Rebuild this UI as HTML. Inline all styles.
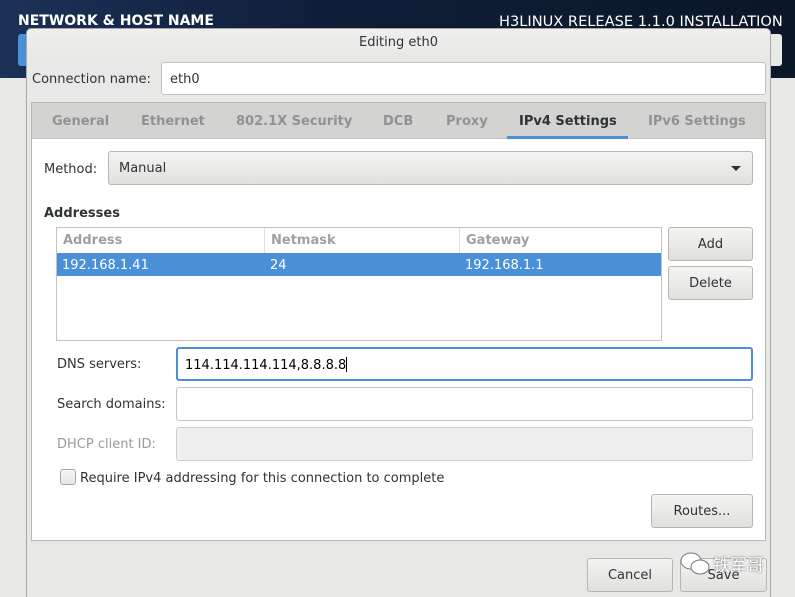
<!DOCTYPE html>
<html><head><meta charset="utf-8"><style>
*{box-sizing:border-box;margin:0;padding:0}
body{width:795px;height:597px;overflow:hidden;position:relative;background:#e8e8e7;font-family:"DejaVu Sans","Liberation Sans",sans-serif;font-size:13px;color:#2e3436}
.abs{position:absolute}
.hdr{left:0;top:0;width:795px;height:78px;background:linear-gradient(90deg,#1c3158,#0f1e38 40%,#0b1628)}
.btn{position:absolute;border:1px solid #b6b6b3;border-radius:3px;background:linear-gradient(#f4f4f2,#e0e0dd);text-align:center;color:#2e3436;padding-top:9px!important}
.inp{position:absolute;background:#fff;border:1px solid #c3c3c0;border-radius:3px}
.tab{position:absolute;top:114px;font-weight:bold;color:#929292}
.lbl{position:absolute;transform:translateY(2px)}
</style></head><body>
<div class="abs hdr"></div>
<div class="abs" style="left:18px;top:13px;color:#fff;font-weight:bold;font-size:14px">NETWORK &amp; HOST NAME</div>
<div class="abs" style="left:499px;top:13px;color:#fff;font-size:14.6px">H3LINUX RELEASE 1.1.0 INSTALLATION</div>
<div class="abs" style="left:18px;top:34px;width:12px;height:32px;background:#4a90d9;border-radius:3px"></div>
<div class="abs" style="left:760px;top:34px;width:22px;height:32px;background:#e8e8e7;border-radius:3px"></div>
<div class="abs" style="left:0;top:78px;width:795px;height:519px;background:#e8e8e7"></div>
<div class="abs" style="left:765px;top:527px;font-size:13px">t</div>

<div class="abs" style="left:26px;top:28px;width:745px;height:569px;background:#e8e8e7;border:1px solid #a8a8a5;border-bottom:none;border-radius:5px 5px 0 0"></div>
<div class="abs" style="left:27px;top:29px;width:743px;height:30px;background:linear-gradient(#efefee,#e8e8e7);border-radius:5px 5px 0 0"></div>
<div class="abs" style="left:26px;top:35px;width:745px;text-align:center">Editing eth0</div>

<div class="lbl" style="left:32px;top:70px">Connection name:</div>
<div class="inp" style="left:161px;top:62px;width:605px;height:33px"></div>
<div class="lbl" style="left:170px;top:70px">eth0</div>

<div class="abs" style="left:31px;top:102px;width:735px;height:439px;background:#fff;border:1px solid #b8b8b5"></div>
<div class="abs" style="left:32px;top:103px;width:733px;height:36px;background:#d3d3d1;border-bottom:1px solid #c3c3c0"></div>
<div class="tab" style="left:52px">General</div>
<div class="tab" style="left:141px">Ethernet</div>
<div class="tab" style="left:236px">802.1X Security</div>
<div class="tab" style="left:383px">DCB</div>
<div class="tab" style="left:446px">Proxy</div>
<div class="tab" style="left:519px;color:#2e3436">IPv4 Settings</div>
<div class="tab" style="left:648px">IPv6 Settings</div>
<div class="abs" style="left:507px;top:136px;width:121px;height:3px;background:#4a90d9"></div>

<div class="lbl" style="left:44px;top:160px">Method:</div>
<div class="btn" style="left:108px;top:151px;width:645px;height:34px;text-align:left;padding:9px 10px 0">Manual</div>
<div class="abs" style="left:731px;top:166px;width:0;height:0;border-left:5px solid transparent;border-right:5px solid transparent;border-top:5px solid #2e3436"></div>

<div class="lbl" style="left:44px;top:204px;font-weight:bold">Addresses</div>
<div class="abs" style="left:56px;top:227px;width:606px;height:114px;border:1px solid #c3c3c0;background:#fff"></div>
<div class="abs" style="left:264px;top:228px;width:1px;height:25px;background:#e0e0de"></div>
<div class="abs" style="left:459px;top:228px;width:1px;height:25px;background:#e0e0de"></div>
<div class="lbl" style="left:63px;top:231px;font-weight:bold;color:#a0a0a0">Address</div>
<div class="lbl" style="left:271px;top:231px;font-weight:bold;color:#a0a0a0">Netmask</div>
<div class="lbl" style="left:466px;top:231px;font-weight:bold;color:#a0a0a0">Gateway</div>
<div class="abs" style="left:57px;top:253px;width:604px;height:23px;background:#4a90d9"></div>
<div class="lbl" style="left:62px;top:256px;color:#fff">192.168.1.41</div>
<div class="lbl" style="left:270px;top:256px;color:#fff">24</div>
<div class="lbl" style="left:465px;top:256px;color:#fff">192.168.1.1</div>

<div class="btn" style="left:668px;top:227px;width:85px;height:34px">Add</div>
<div class="btn" style="left:668px;top:266px;width:85px;height:34px">Delete</div>

<div class="lbl" style="left:57px;top:355px">DNS servers:</div>
<div class="inp" style="left:176px;top:347px;width:577px;height:34px;border:2px solid #4a90d9"></div>
<div class="lbl" style="left:185px;top:355px;color:#000">114.114.114.114,8.8.8.8<span style="display:inline-block;width:1px;height:15px;background:#000;vertical-align:-3px"></span></div>

<div class="lbl" style="left:57px;top:395px">Search domains:</div>
<div class="inp" style="left:176px;top:387px;width:577px;height:34px"></div>

<div class="lbl" style="left:57px;top:435px;color:#9a9a9a">DHCP client ID:</div>
<div class="inp" style="left:176px;top:427px;width:577px;height:34px;background:#efefef;border-color:#cdcdcb"></div>

<div class="abs" style="left:60px;top:469px;width:16px;height:16px;border:1px solid #a8a8a5;border-radius:3px;background:linear-gradient(#f6f6f4,#e6e6e3)"></div>
<div class="lbl" style="left:80px;top:469px">Require IPv4 addressing for this connection to complete</div>

<div class="btn" style="left:651px;top:494px;width:102px;height:34px">Routes...</div>

<div class="btn" style="left:587px;top:558px;width:86px;height:34px">Cancel</div>
<div class="btn" style="left:680px;top:558px;width:87px;height:34px">Save</div>
<div class="abs" style="left:678px;top:550px;width:36px;height:26px">
<svg width="36" height="26"><ellipse cx="13" cy="11" rx="10" ry="8" fill="#fff" stroke="#777"/><ellipse cx="22" cy="17" rx="9" ry="7" fill="#fff" stroke="#777"/></svg></div>
<div class="abs" style="left:713px;top:551px;font-family:'Noto Sans CJK SC',sans-serif;font-size:17px;color:#fff;text-shadow:0 0 2px #555">铁军哥</div>
</body></html>
